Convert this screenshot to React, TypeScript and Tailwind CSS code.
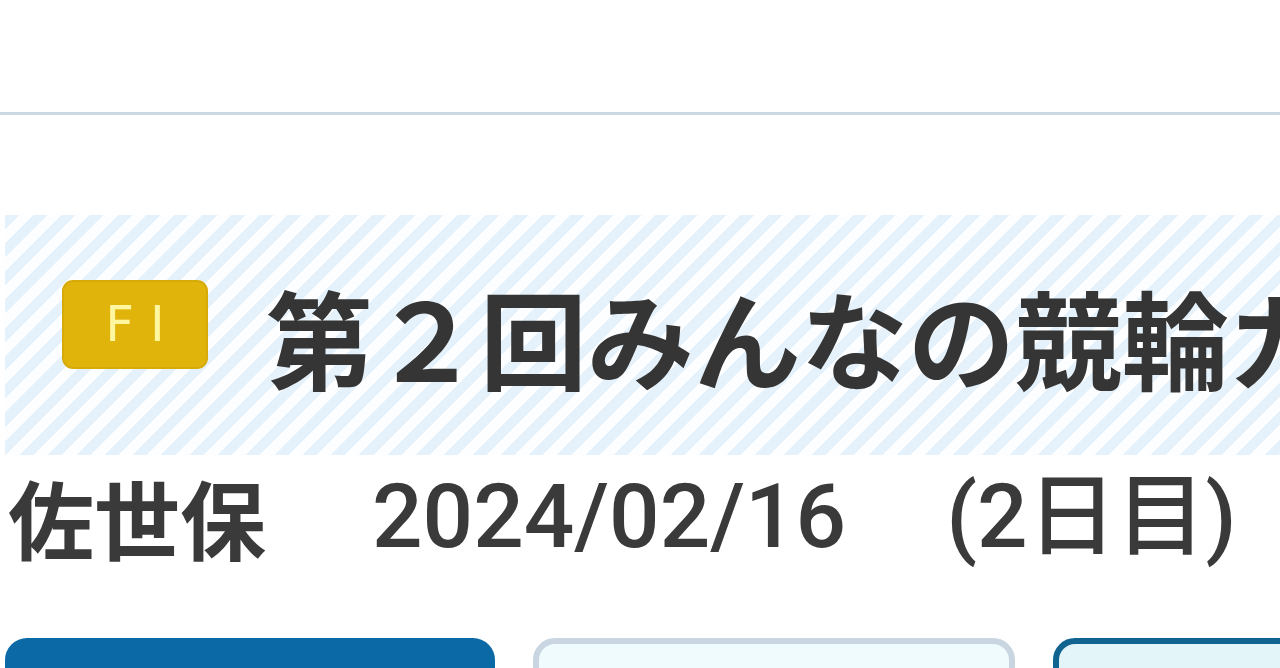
import React from "react";

export default function App() {
  return (
    <div
      className="w-[1280px] h-[668px] overflow-hidden bg-white flex flex-col"
      style={{ fontFamily: '"Noto Sans CJK JP", "Noto Sans", sans-serif' }}
    >
      <div className="h-[112px] shrink-0" />
      <div className="h-[3px] shrink-0 bg-[#cbd7e2]" />
      <div className="h-[100px] shrink-0" />
      <div className="ml-[5px] h-[240px] shrink-0 flex items-center overflow-hidden bg-[repeating-linear-gradient(135deg,#e5f2fb_0px,#e5f2fb_10px,#fdfeff_10px,#fdfeff_20px)]">
        <div className="ml-[57px] mb-[22px] w-[146px] h-[89px] shrink-0 rounded-[11px] bg-[#e1b40c] border-2 border-[#d6aa08] flex items-center justify-center">
          <span
            className="text-[50px] leading-none text-[#fff6a0] tracking-[16px] pl-[16px]"
            style={{ fontFamily: '"DejaVu Sans", sans-serif', fontWeight: 400 }}
          >
            FI
          </span>
        </div>
        <div className="ml-[58px] whitespace-nowrap text-[107px] leading-none font-bold text-[#353535]">
          第２回みんなの競輪ガイド
        </div>
      </div>
      <div className="mt-[12px] ml-[8px] flex items-center whitespace-nowrap text-[86px] leading-[100px] text-[#3a3a3a]">
        <span className="font-bold">佐世保</span>
        <span
          className="ml-[106px]"
          style={{ fontFamily: 'Roboto, "Noto Sans CJK JP", sans-serif', fontSize: 89, fontWeight: 500 }}
        >
          2024/02/16
        </span>
        <span
          className="ml-[100px]"
          style={{ fontFamily: 'Roboto, "Noto Sans CJK JP", sans-serif', fontSize: 89, fontWeight: 500 }}
        >
          (2日目)
        </span>
      </div>
      <div className="mt-auto h-[30px] flex items-start gap-[38px] ml-[5px]">
        <div className="w-[490px] h-[40px] shrink-0 rounded-t-[22px] bg-[#0b69a6]" />
        <div className="w-[482px] h-[40px] shrink-0 rounded-t-[22px] border-[6px] border-[#c9d6e2] bg-[#f0fbfd]" />
        <div className="w-[300px] h-[40px] shrink-0 rounded-t-[22px] border-[6px] border-[#10648f] bg-[#e4f5fa]" />
      </div>
    </div>
  );
}
